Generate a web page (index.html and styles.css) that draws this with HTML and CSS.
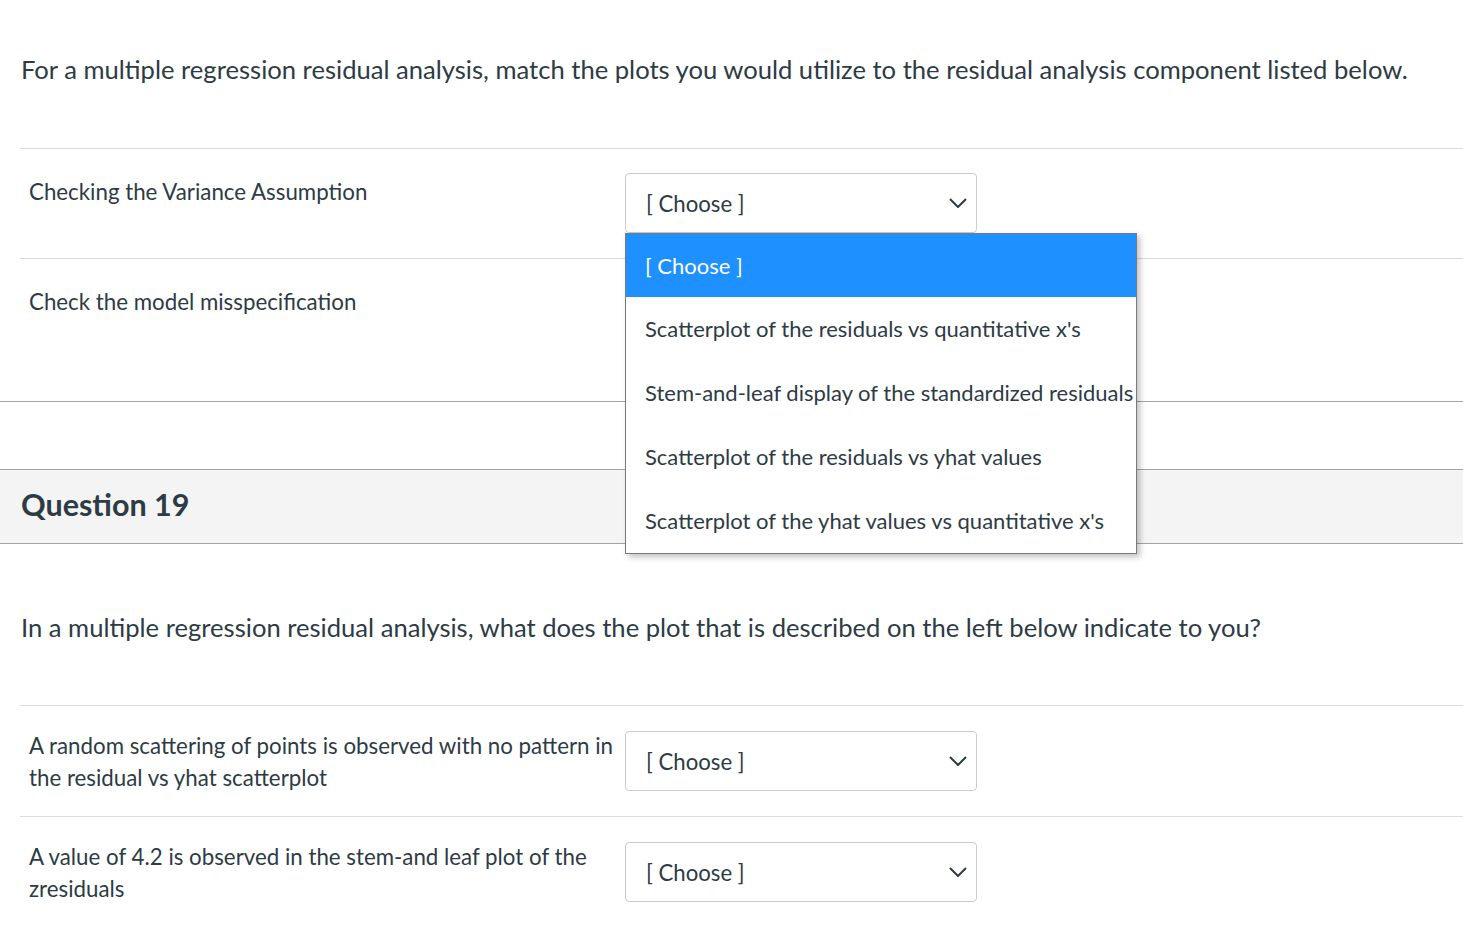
FILE: index.html
```html
<!DOCTYPE html>
<html>
<head>
<meta charset="utf-8">
<link rel="stylesheet" href="styles.css">
</head>
<body>
<div class="page">
  <section class="question q-first">
    <div class="prompt">For a multiple regression residual analysis, match the plots you would utilize to the residual analysis component listed below.</div>
    <div class="answers">
      <div class="row">
        <div class="label">Checking the Variance Assumption</div>
        <div class="choice">
          <div class="select">
            <span>[ Choose ]</span>
            <svg class="chev" width="18" height="10" viewBox="0 0 18 10"><path d="M1 1 L9 9 L17 1" fill="none" stroke="#2d3b45" stroke-width="2"/></svg>
          </div>
          <ul class="menu">
            <li class="active">[ Choose ]</li>
            <li>Scatterplot of the residuals vs quantitative x's</li>
            <li>Stem-and-leaf display of the standardized residuals</li>
            <li>Scatterplot of the residuals vs yhat values</li>
            <li>Scatterplot of the yhat values vs quantitative x's</li>
          </ul>
        </div>
      </div>
      <div class="row last">
        <div class="label">Check the model misspecification</div>
        <div class="choice">
          <div class="select">
            <span>[ Choose ]</span>
            <svg class="chev" width="18" height="10" viewBox="0 0 18 10"><path d="M1 1 L9 9 L17 1" fill="none" stroke="#2d3b45" stroke-width="2"/></svg>
          </div>
        </div>
      </div>
    </div>
  </section>

  <section class="question q-second">
    <header class="qheader"><h2>Question 19</h2></header>
    <div class="prompt">In a multiple regression residual analysis, what does the plot that is described on the left below indicate to you?</div>
    <div class="answers">
      <div class="row">
        <div class="label">A random scattering of points is observed with no pattern in the residual vs yhat scatterplot</div>
        <div class="choice">
          <div class="select">
            <span>[ Choose ]</span>
            <svg class="chev" width="18" height="10" viewBox="0 0 18 10"><path d="M1 1 L9 9 L17 1" fill="none" stroke="#2d3b45" stroke-width="2"/></svg>
          </div>
        </div>
      </div>
      <div class="row last">
        <div class="label">A value of 4.2 is observed in the stem-and leaf plot of the zresiduals</div>
        <div class="choice">
          <div class="select">
            <span>[ Choose ]</span>
            <svg class="chev" width="18" height="10" viewBox="0 0 18 10"><path d="M1 1 L9 9 L17 1" fill="none" stroke="#2d3b45" stroke-width="2"/></svg>
          </div>
        </div>
      </div>
    </div>
  </section>
</div>
</body>
</html>
```

FILE: styles.css
```css
html, body {
  margin: 0;
  padding: 0;
  background: #ffffff;
}
body {
  font-family: Lato, "Noto Sans", sans-serif;
  color: #2d3b45;
  overflow: hidden;
}
.page {
  width: 1463px;
}
.question.q-first {
  border-bottom: 1px solid #a5a5a5;
}
.prompt {
  font-size: 25.6px;
  line-height: 36px;
  padding: 51px 20px 0 21px;
  height: 97px;
  white-space: nowrap;
}
.q-second .prompt {
  padding-top: 65px;
  height: 96px;
}
.answers {
  margin-left: 20px;
  border-top: 1px solid #dcdcdc;
}
.row {
  display: flex;
  border-bottom: 1px solid #dcdcdc;
  min-height: 109px;
}
.q-second .row {
  min-height: 110px;
}
.row.last {
  border-bottom: none;
}
.q-first .row.last {
  min-height: 142px;
}
.label {
  width: 596px;
  padding: 27px 0 0 9px;
  font-size: 22.3px;
  line-height: 32px;
  box-sizing: border-box;
  flex: none;
}
.q-second .label {
  padding-top: 24px;
}
.choice {
  position: relative;
  padding-top: 24px;
  margin-left: 9px;
}
.q-second .choice {
  padding-top: 25px;
}
.select {
  box-sizing: border-box;
  height: 60px;
  width: 352px;
  border: 1px solid #c7cdd1;
  border-radius: 4px;
  display: flex;
  align-items: center;
  justify-content: space-between;
  padding: 0 9px 0 20px;
  font-size: 22.2px;
}
.chev {
  display: block;
}
.menu {
  position: absolute;
  top: 84px;
  left: 0;
  width: 512px;
  margin: 0;
  padding: 0;
  list-style: none;
  background: #fff;
  border: 1px solid #7a7a7a;
  box-sizing: border-box;
  box-shadow: 3px 3px 6px rgba(0,0,0,0.25);
  z-index: 10;
}
.menu li {
  height: 64px;
  line-height: 64px;
  padding-left: 19px;
  font-size: 22px;
  color: #2d3b45;
  white-space: nowrap;
}
.menu li.active {
  background: #1e90ff;
  color: #ffffff;
  height: 63px;
  line-height: 63px;
}
.qheader {
  margin-top: 67px;
  background: #f4f4f4;
  border-top: 1px solid #a5a5a5;
  border-bottom: 1px solid #a5a5a5;
  height: 73px;
  display: flex;
  align-items: center;
  padding-left: 21px;
}
.qheader h2 {
  margin: 0 0 5px 0;
  font-size: 30.5px;
  font-weight: 700;
  color: #2d3b45;
}
```
